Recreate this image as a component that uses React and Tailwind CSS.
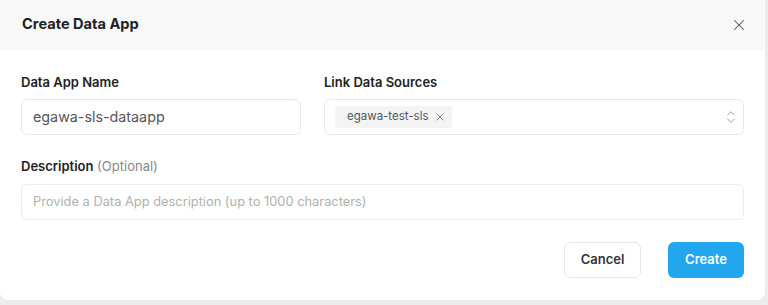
import { X, ChevronsUpDown } from "lucide-react";

export default function App() {
  return (
    <div
      className="h-[305px] w-[768px] bg-[#ececec]"
      style={{ fontFamily: "Inter, 'Noto Sans', sans-serif" }}
    >
      <div className="flex h-[300px] w-[765px] flex-col overflow-hidden rounded-b-lg bg-white">
        <header className="flex h-[50px] items-center justify-between bg-[#f8f8f8] pl-[22px] pr-[17px]">
          <h2 className="text-[14.6px] font-bold text-[#222]">Create Data App</h2>
          <X className="h-[18px] w-[18px] text-[#555]" strokeWidth={1.4} />
        </header>

        <div className="flex flex-col pl-[21px] pr-[21px] pt-[22px]">
          <div className="grid grid-cols-[280px_1fr] gap-x-[23px]">
            <div className="flex flex-col gap-[7px]">
              <label className="text-[13px] font-semibold leading-5 text-[#222]">Data App Name</label>
              <div className="flex h-[36px] items-center rounded-md border border-[#e8e8e8] px-[11px] text-[14.3px] text-[#555]">
                egawa-sls-dataapp
              </div>
            </div>
            <div className="flex flex-col gap-[7px]">
              <label className="text-[13px] font-semibold leading-5 text-[#222]">Link Data Sources</label>
              <div className="flex h-[36px] items-center justify-between rounded-md border border-[#e8e8e8] pl-[10px] pr-[4px]">
                <span className="flex h-[22px] items-center gap-[5px] rounded bg-[#f4f4f4] pl-[12px] pr-[6px] text-[11.5px] text-[#555]">
                  egawa-test-sls
                  <X className="h-[12px] w-[12px] text-[#666]" strokeWidth={1.7} />
                </span>
                <ChevronsUpDown className="h-[16px] w-[16px] text-[#999]" strokeWidth={1.4} />
              </div>
            </div>
          </div>

          <div className="mt-[21px] flex flex-col gap-[8px]">
            <label className="text-[13px] leading-5 text-[#222]">
              <span className="font-semibold">Description</span>{" "}
              <span className="text-[#888]">(Optional)</span>
            </label>
            <div className="flex h-[36px] items-center rounded-md border border-[#ececec] px-[11px] text-[12.85px] text-[#b0b0b0]">
              Provide a Data App description (up to 1000 characters)
            </div>
          </div>

          <div className="mt-[22px] flex justify-end gap-[27px]">
            <button className="h-[36px] w-[77px] rounded-md border border-[#e8e8e8] bg-white text-[13px] font-semibold text-[#333]">
              Cancel
            </button>
            <button className="h-[36px] w-[76px] rounded-md bg-[#22a6ee] text-[13px] font-semibold text-white">
              Create
            </button>
          </div>
        </div>
      </div>
    </div>
  );
}
